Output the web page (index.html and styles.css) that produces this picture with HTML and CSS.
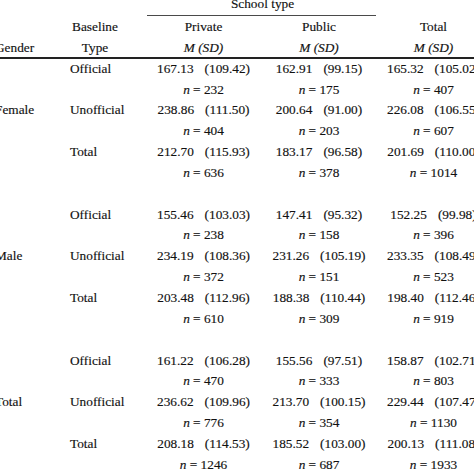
FILE: index.html
```html
<!DOCTYPE html>
<html lang="en">
<head>
<meta charset="utf-8">
<title>School type table</title>
<link rel="stylesheet" href="styles.css">
</head>
<body>
<div class="page">
  <div class="row head0">
    <div class="cell"></div>
    <div class="cell"></div>
    <div class="cell group">School type</div>
    <div class="cell"></div>
  </div>
  <div class="row head1">
    <div class="cell"></div>
    <div class="cell type-h">Baseline</div>
    <div class="cell center">Private</div>
    <div class="cell center">Public</div>
    <div class="cell center">Total</div>
  </div>
  <div class="row head2">
    <div class="cell">Gender</div>
    <div class="cell type-h">Type</div>
    <div class="cell center"><i>M (SD)</i></div>
    <div class="cell center"><i>M (SD)</i></div>
    <div class="cell center"><i>M (SD)</i></div>
  </div>
  <div class="rule"></div>

  <!-- Female -->
  <div class="row data">
    <div class="cell"></div><div class="cell type">Official</div>
    <div class="cell ms"><span>167.13</span><span>(109.42)</span></div>
    <div class="cell ms"><span>162.91</span><span>(99.15)</span></div>
    <div class="cell ms"><span>165.32</span><span>(105.02)</span></div>
  </div>
  <div class="row data">
    <div class="cell"></div><div class="cell"></div>
    <div class="cell center"><i>n</i> = 232</div>
    <div class="cell center"><i>n</i> = 175</div>
    <div class="cell center"><i>n</i> = 407</div>
  </div>
  <div class="row data">
    <div class="cell">Female</div><div class="cell type">Unofficial</div>
    <div class="cell ms"><span>238.86</span><span>(111.50)</span></div>
    <div class="cell ms"><span>200.64</span><span>(91.00)</span></div>
    <div class="cell ms"><span>226.08</span><span>(106.55)</span></div>
  </div>
  <div class="row data">
    <div class="cell"></div><div class="cell"></div>
    <div class="cell center"><i>n</i> = 404</div>
    <div class="cell center"><i>n</i> = 203</div>
    <div class="cell center"><i>n</i> = 607</div>
  </div>
  <div class="row data">
    <div class="cell"></div><div class="cell type">Total</div>
    <div class="cell ms"><span>212.70</span><span>(115.93)</span></div>
    <div class="cell ms"><span>183.17</span><span>(96.58)</span></div>
    <div class="cell ms"><span>201.69</span><span>(110.00)</span></div>
  </div>
  <div class="row data">
    <div class="cell"></div><div class="cell"></div>
    <div class="cell center"><i>n</i> = 636</div>
    <div class="cell center"><i>n</i> = 378</div>
    <div class="cell center"><i>n</i> = 1014</div>
  </div>
  <div class="row data"></div>

  <!-- Male -->
  <div class="row data">
    <div class="cell"></div><div class="cell type">Official</div>
    <div class="cell ms"><span>155.46</span><span>(103.03)</span></div>
    <div class="cell ms"><span>147.41</span><span>(95.32)</span></div>
    <div class="cell ms"><span>152.25</span><span>(99.98)</span></div>
  </div>
  <div class="row data">
    <div class="cell"></div><div class="cell"></div>
    <div class="cell center"><i>n</i> = 238</div>
    <div class="cell center"><i>n</i> = 158</div>
    <div class="cell center"><i>n</i> = 396</div>
  </div>
  <div class="row data">
    <div class="cell">Male</div><div class="cell type">Unofficial</div>
    <div class="cell ms"><span>234.19</span><span>(108.36)</span></div>
    <div class="cell ms"><span>231.26</span><span>(105.19)</span></div>
    <div class="cell ms"><span>233.35</span><span>(108.49)</span></div>
  </div>
  <div class="row data">
    <div class="cell"></div><div class="cell"></div>
    <div class="cell center"><i>n</i> = 372</div>
    <div class="cell center"><i>n</i> = 151</div>
    <div class="cell center"><i>n</i> = 523</div>
  </div>
  <div class="row data">
    <div class="cell"></div><div class="cell type">Total</div>
    <div class="cell ms"><span>203.48</span><span>(112.96)</span></div>
    <div class="cell ms"><span>188.38</span><span>(110.44)</span></div>
    <div class="cell ms"><span>198.40</span><span>(112.46)</span></div>
  </div>
  <div class="row data">
    <div class="cell"></div><div class="cell"></div>
    <div class="cell center"><i>n</i> = 610</div>
    <div class="cell center"><i>n</i> = 309</div>
    <div class="cell center"><i>n</i> = 919</div>
  </div>
  <div class="row data"></div>

  <!-- Total -->
  <div class="row data">
    <div class="cell"></div><div class="cell type">Official</div>
    <div class="cell ms"><span>161.22</span><span>(106.28)</span></div>
    <div class="cell ms"><span>155.56</span><span>(97.51)</span></div>
    <div class="cell ms"><span>158.87</span><span>(102.71)</span></div>
  </div>
  <div class="row data">
    <div class="cell"></div><div class="cell"></div>
    <div class="cell center"><i>n</i> = 470</div>
    <div class="cell center"><i>n</i> = 333</div>
    <div class="cell center"><i>n</i> = 803</div>
  </div>
  <div class="row data">
    <div class="cell">Total</div><div class="cell type">Unofficial</div>
    <div class="cell ms"><span>236.62</span><span>(109.96)</span></div>
    <div class="cell ms"><span>213.70</span><span>(100.15)</span></div>
    <div class="cell ms"><span>229.44</span><span>(107.47)</span></div>
  </div>
  <div class="row data">
    <div class="cell"></div><div class="cell"></div>
    <div class="cell center"><i>n</i> = 776</div>
    <div class="cell center"><i>n</i> = 354</div>
    <div class="cell center"><i>n</i> = 1130</div>
  </div>
  <div class="row data">
    <div class="cell"></div><div class="cell type">Total</div>
    <div class="cell ms"><span>208.18</span><span>(114.53)</span></div>
    <div class="cell ms"><span>185.52</span><span>(103.00)</span></div>
    <div class="cell ms"><span>200.13</span><span>(111.08)</span></div>
  </div>
  <div class="row data">
    <div class="cell"></div><div class="cell"></div>
    <div class="cell center"><i>n</i> = 1246</div>
    <div class="cell center"><i>n</i> = 687</div>
    <div class="cell center"><i>n</i> = 1933</div>
  </div>
</div>
</body>
</html>
```

FILE: styles.css
```css
html, body {
  margin: 0;
  padding: 0;
  background: #ffffff;
  overflow: hidden;
}

body {
  width: 474px;
  height: 474px;
  font-family: "Liberation Serif", "Times New Roman", serif;
  font-size: 13.3px;
  color: #111111;
  -webkit-text-stroke: 0.15px #111111;
}

.page {
  margin-top: -5.9px;
  margin-left: -5px;
  width: 494px;
}

.row {
  display: grid;
  grid-template-columns: 70px 82px 113px 118px 111px;
  white-space: nowrap;
}

.cell {
  box-sizing: border-box;
  overflow: visible;
}

.head0 {
  height: 21.85px;
  line-height: 20.85px;
}

.head0 .group {
  grid-column: 3 / span 2;
  text-align: center;
  border-bottom: 1px solid #4a4a4a;
  margin-right: 2px;
  padding-left: 2px;
}

.head1 {
  height: 21.7px;
  line-height: 21.7px;
}

.head2 {
  height: 19.6px;
  line-height: 19.6px;
}

.rule {
  height: 1.5px;
  background: #222222;
}

.data {
  height: 20.85px;
  line-height: 20.85px;
}

.center {
  text-align: center;
}

.type-h {
  text-align: center;
  padding-right: 22px;
}

.type {
  padding-left: 5px;
}

.ms {
  display: flex;
  justify-content: center;
  gap: 11px;
}
```
